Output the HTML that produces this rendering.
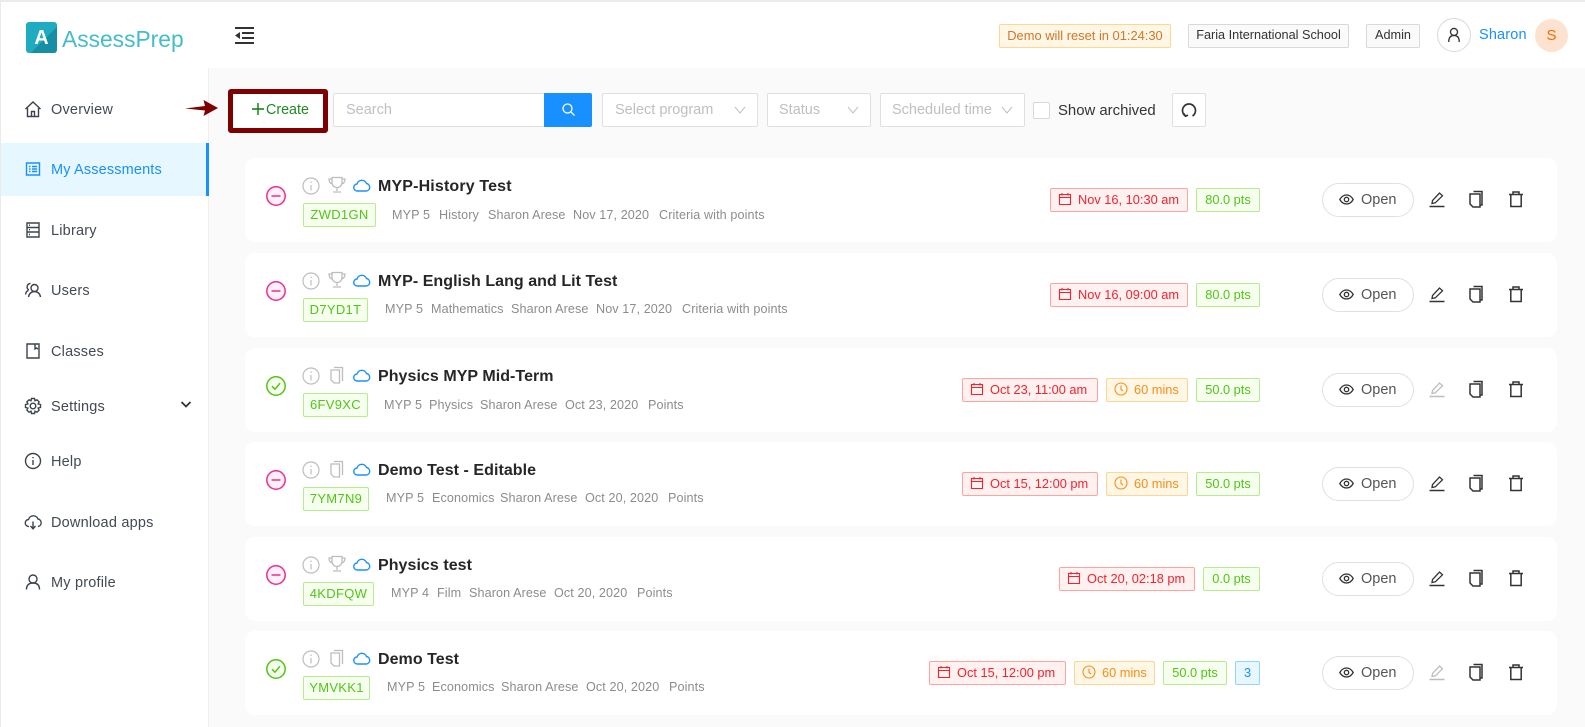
<!DOCTYPE html>
<html><head><meta charset="utf-8"><style>
html,body{margin:0;padding:0}
body{width:1585px;height:727px;overflow:hidden;position:relative;background:#fafafa;font-family:"Liberation Sans",sans-serif;color:#333}
div,span,svg{position:absolute;box-sizing:border-box}
.n{white-space:nowrap;line-height:20px;height:20px;font-size:14.5px;color:#434a54;left:51px;letter-spacing:.2px}
.ni{left:24px;width:18px;height:18px;fill:none;stroke:#3c434d;stroke-width:1.4}
.tag{height:24px;top:24px;font-size:12.7px;line-height:21px;text-align:center;border:1px solid #d9d9d9;border-radius:2px;background:#fafafa;color:#333;white-space:nowrap}
.in{top:93px;height:34px;background:#fff;border:1px solid #e0e0e0;border-radius:2px;font-size:14.5px;color:#bfbfbf;line-height:33px;white-space:nowrap}
.in span{left:12px;top:0}
.in svg{top:11px;width:12px;height:10px;fill:none;stroke:#bfbfbf;stroke-width:1}
.c{left:245px;width:1312px;height:84px;background:#fff;border-radius:10px}
.st{left:21px;top:28px;width:20px;height:20px;fill:none;stroke-width:1.5}
.g{left:57px;top:19px;width:18px;height:18px;fill:none;stroke:#bdbdbd;stroke-width:1.2}
.g2{left:83px;top:18px;width:18px;height:18px;fill:none;stroke:#bdbdbd;stroke-width:1.3}
.cl{left:108px;top:20px;width:18px;height:15px;fill:none;stroke:#1890ff;stroke-width:1.4}
.t{left:133px;top:18px;line-height:22px;font-size:16px;font-weight:700;color:#262626;white-space:nowrap;letter-spacing:.05px}
.k{left:58px;top:45px;height:24px;background:#f6ffed;border:1px solid #b7eb8f;border-radius:2px;color:#52c41a;font-size:13px;line-height:22px;text-align:center;letter-spacing:.3px}
.m{top:48px;line-height:18px;font-size:12.6px;color:#8c8c8c;white-space:nowrap;letter-spacing:.1px}
.up .m{top:47px}
.b{top:30px;height:24px;border:1px solid;border-radius:2px;font-size:12.8px;line-height:22px;white-space:nowrap}
.b span{top:0}
.r{background:#fff1f0;border-color:#ffa39e;color:#f5222d}
.o{background:#fff7e6;border-color:#ffd591;color:#fa8c16}
.v{background:#f6ffed;border-color:#b7eb8f;color:#52c41a;text-align:center}
.u{background:#e6f7ff;border-color:#91d5ff;color:#1890ff;text-align:center}
.b svg{left:7px;top:3px;width:14px;height:14px;fill:none;stroke:currentColor;stroke-width:1.1}
.op{left:1077px;top:25px;width:92px;height:34px;border:1px solid #e0e0e0;border-radius:17px;background:#fff;font-size:14.5px;color:#555;line-height:32px}
.op span{left:38px;top:0}
.op svg{left:16px;top:8px;width:15px;height:15px;fill:none;stroke:#333;stroke-width:1.3}
.a{top:32px;width:18px;height:18px;fill:none;stroke:#333;stroke-width:1.3}
.pe{left:1183px}.co{left:1222px}.tr{left:1262px}
.dis{stroke:#bdbdbd}
</style></head><body>
<svg width="0" height="0" style="left:0;top:0">
<symbol id="minus" viewBox="0 0 20 20"><circle cx="10" cy="10" r="9.2" fill="#fff0f6" stroke="#eb2f96"/><path d="M5.5 10h9" stroke="#eb2f96"/></symbol>
<symbol id="check" viewBox="0 0 20 20"><circle cx="10" cy="10" r="9.2" fill="#f6ffed" stroke="#52c41a"/><path d="M6 10.2l3 3 5-6" stroke="#52c41a"/></symbol>
<symbol id="info" viewBox="0 0 18 18"><circle cx="9" cy="9" r="8"/><path d="M9 8v5.5M9 4.500v1.500"/></symbol>
<symbol id="trophy" viewBox="0 0 18 18"><path d="M4 1.500h10v5a5 5 0 0 1-10 0zM4 3H1c0 3 1 4.500 3.500 5M14 3h3c0 3-1 4.500-3.500 5M9 11.500v3.500M5 16h8"/></symbol>
<symbol id="copyg" viewBox="0 0 18 18"><path d="M6 1.500h8.500v13.500M3 4h8.500v13H6l-3-3z"/></symbol>
<symbol id="cloud" viewBox="0 0 18 15"><path d="M4.500 13a3.500 3.500 0 0 1-.5-7A5 5 0 0 1 13.500 5.500 3.800 3.800 0 0 1 13.500 13z"/></symbol>
<symbol id="cal" viewBox="0 0 14 14"><path d="M1.500 2.500h11v10h-11zM1.500 5.500h11M4 1v2.500M10 1v2.500"/></symbol>
<symbol id="clk" viewBox="0 0 14 14"><circle cx="7" cy="7" r="6"/><path d="M7 3.500V7.500l2 1.500"/></symbol>
<symbol id="eye" viewBox="0 0 15 15"><path d="M.8 7.500C2.500 4.500 4.800 3 7.500 3s5 1.500 6.700 4.500C12.500 10.500 10.200 12 7.500 12S2.500 10.500.8 7.500z"/><circle cx="7.500" cy="7.500" r="2.200"/></symbol>
<symbol id="pen" viewBox="0 0 18 18"><path d="M1.500 16.500h15" stroke-width="1.500"/><path d="M4 13.500l.5-3L11.500 3l3 2.800-7.200 7z"/></symbol>
<symbol id="cop" viewBox="0 0 18 18"><path d="M6.500 1.500h8.500v13.500h-1.500M3 4h10v13H6l-3-3z" stroke-width="1.500"/></symbol>
<symbol id="tra" viewBox="0 0 18 18"><path d="M2 4.500h14M6 4.500V2h6v2.500M3.800 4.500V16.500h10.400V4.500" stroke-width="1.500"/></symbol>
<symbol id="chev" viewBox="0 0 12 10"><path d="M1 2l5 6 5-6"/></symbol>
</svg>

<div style="left:0;top:0;width:1585px;height:68px;background:#fff"></div>
<div style="left:0;top:0;width:1585px;height:2px;background:#ebebeb"></div>
<div style="left:0;top:68px;width:209px;height:659px;background:#fff;border-right:1px solid #efefef"></div>
<div style="left:0;top:0;width:1px;height:727px;background:#ebebeb"></div>

<div style="left:26px;top:22px;width:31px;height:31px;border-radius:3px;background:linear-gradient(135deg,#1fabc0 58%,#168fa5 58%)"></div>
<div style="left:26px;top:22px;width:31px;height:31px;color:#fff;font-weight:700;font-size:20px;line-height:32px;text-align:center">A</div>
<div style="left:62px;top:23px;font-size:22.8px;line-height:32px;color:#45bccb;white-space:nowrap">AssessPrep</div>
<svg style="left:235px;top:27px;width:20px;height:17px" viewBox="0 0 20 17" fill="none" stroke="#333" stroke-width="2"><path d="M0 1h19M7 6h12M7 11h12M0 16h19"/><path d="M5 5v7L0 8.500z" fill="#333" stroke="none"/></svg>

<div class="tag" style="left:999px;width:172px;background:#fff7e6;border-color:#ffd591;color:#d4762a;font-size:12.9px">Demo will reset in 01:24:30</div>
<div class="tag" style="left:1188px;width:161px">Faria International School</div>
<div class="tag" style="left:1366px;width:54px">Admin</div>
<div style="left:1437px;top:18px;width:34px;height:34px;border-radius:50%;border:1px solid #d9d9d9"></div>
<svg style="left:1447px;top:27px;width:14px;height:16px" viewBox="0 0 16 18" fill="none" stroke="#333" stroke-width="1.500"><circle cx="8" cy="5.500" r="4"/><path d="M2 17c0-5 2-7.500 6-7.500s6 2.500 6 7.500"/></svg>
<div style="left:1479px;top:25px;font-size:14.5px;line-height:20px;color:#1890ff;letter-spacing:.15px">Sharon</div>
<div style="left:1535px;top:19px;width:33px;height:33px;border-radius:50%;background:#fde3cf;color:#f56a00;font-size:15px;line-height:33px;text-align:center">S</div>

<svg class="ni" style="top:100px" viewBox="0 0 18 18"><path d="M1.500 9L9 2l7.500 7M3.500 8v8.500h11V8M7.500 16.500v-5h3v5"/></svg>
<div class="n" style="top:100px">Overview</div>
<div style="left:1px;top:143px;width:208px;height:53px;background:#e6f7ff;border-right:3px solid #1890ff"></div>
<svg class="ni" style="top:160px;stroke:#1890ff" viewBox="0 0 18 18"><path d="M2.500 3h13v12h-13zM5 6.500h1.500M8 6.500h5M5 9h1.500M8 9h5M5 11.500h1.500M8 11.500h5"/></svg>
<div class="n" style="top:160px;color:#1890ff;letter-spacing:.15px">My Assessments</div>
<svg class="ni" style="top:221px" viewBox="0 0 18 18"><path d="M3 2h12v14H3zM3 6.500h12M3 11h12M5 4.200h1M5 8.700h1M5 13.500h1"/></svg>
<div class="n" style="top:221px">Library</div>
<svg class="ni" style="top:281px" viewBox="0 0 18 18"><circle cx="10.500" cy="7" r="3.500"/><path d="M4.500 16c.5-3.500 3-5.500 6-5.500s5.500 2 6 5.500M6.500 2.500A3.500 3.500 0 0 0 4.800 9M1.500 13.500c.3-2 1.300-3.500 3-4.200"/></svg>
<div class="n" style="top:281px">Users</div>
<svg class="ni" style="top:342px" viewBox="0 0 18 18"><path d="M3 2h12v14H3zM11 2v5l1.500-1 1.500 1"/></svg>
<div class="n" style="top:342px">Classes</div>
<svg class="ni" style="top:397px" viewBox="0 0 18 18"><circle cx="9" cy="9" r="2.800"/><path d="M7.500 1.500h3l.5 2.200 2-.9 2.100 2.100-1 2 2.400.6v3l-2.400.6 1 2-2.100 2.100-2-1-.5 2.300h-3l-.5-2.300-2 1-2.100-2.100 1-2-2.400-.6v-3l2.400-.6-1-2 2.100-2.100 2 .9z"/></svg>
<div class="n" style="top:397px">Settings</div>
<svg style="left:180px;top:400px;width:12px;height:9px" viewBox="0 0 12 9" fill="none" stroke="#333" stroke-width="1.800"><path d="M1.500 2l4.500 4.500L10.500 2"/></svg>
<svg class="ni" style="top:452px" viewBox="0 0 18 18"><circle cx="9" cy="9" r="7.500"/><path d="M9 8v5M9 5v1.300"/></svg>
<div class="n" style="top:452px">Help</div>
<svg class="ni" style="top:513px" viewBox="0 0 18 18"><path d="M5 13.500a3.500 3.500 0 0 1-.5-7A5 5 0 0 1 14 6a3.800 3.800 0 0 1 0 7.500M9 8.500v7M6.500 13l2.500 2.800 2.500-2.800"/></svg>
<div class="n" style="top:513px">Download apps</div>
<svg class="ni" style="top:573px" viewBox="0 0 18 18"><circle cx="9" cy="6" r="4"/><path d="M2.500 16.500c0-4.500 2.500-6.500 6.500-6.500s6.500 2 6.500 6.500"/></svg>
<div class="n" style="top:573px">My profile</div>

<svg style="left:185px;top:99px;width:34px;height:18px" viewBox="0 0 34 18"><path d="M0 9.500L20 7 18.500 1 33 9 18.500 17 20 11.500z" fill="#7f0000"/></svg>
<div style="left:228px;top:89px;width:100px;height:44px;background:#fff;border:5px solid #7f0000;border-radius:3px"></div>
<svg style="left:252px;top:103px;width:12px;height:12px" viewBox="0 0 13 13" stroke="#0a7a0a" stroke-width="1.500"><path d="M6.500 0v13M0 6.500h13"/></svg>
<div style="left:266px;top:100px;font-size:14.3px;line-height:20px;color:#1f8a1f;white-space:nowrap">Create</div>

<div class="in" style="left:333px;width:212px;border-radius:2px 0 0 2px"><span>Search</span></div>
<div style="left:544px;top:93px;width:48px;height:34px;background:#1890ff;border-radius:0 2px 2px 0"></div>
<svg style="left:561px;top:102px;width:15px;height:15px" viewBox="0 0 15 15" fill="none" stroke="#fff" stroke-width="1.300"><circle cx="6.500" cy="6.500" r="4.500"/><path d="M10 10l3.500 3.500"/></svg>
<div class="in" style="left:602px;width:156px"><span>Select program</span><svg style="left:131px"><use href="#chev"/></svg></div>
<div class="in" style="left:767px;width:104px"><span style="left:11px">Status</span><svg style="left:79px"><use href="#chev"/></svg></div>
<div class="in" style="left:880px;width:145px"><span style="left:11px">Scheduled time</span><svg style="left:120px"><use href="#chev"/></svg></div>
<div style="left:1033px;top:102px;width:17px;height:17px;background:#fff;border:1px solid #d9d9d9;border-radius:2px"></div>
<div style="left:1058px;top:101px;font-size:14.9px;line-height:20px;color:#333;white-space:nowrap">Show archived</div>
<div style="left:1172px;top:93px;width:34px;height:34px;background:#fff;border:1px solid #e0e0e0;border-radius:2px"></div>
<svg style="left:1181px;top:102px;width:16px;height:16px" viewBox="0 0 16 16" fill="none" stroke="#333" stroke-width="1.700"><path d="M4.500 14A6.500 6.500 0 1 1 11.500 14M2.800 11.500l1.700 2.700 2.500-1"/></svg>

<!-- Row 1 -->
<div class="c" style="top:158px">
<svg class="st"><use href="#minus"/></svg><svg class="g"><use href="#info"/></svg><svg class="g2"><use href="#trophy"/></svg><svg class="cl"><use href="#cloud"/></svg>
<div class="t" style="letter-spacing:.15px">MYP-History Test</div><div class="k" style="width:73px">ZWD1GN</div>
<span class="m" style="left:147px">MYP 5</span><span class="m" style="left:194px">History</span><span class="m" style="left:243px">Sharon Arese</span><span class="m" style="left:328px">Nov 17, 2020</span><span class="m" style="left:414px">Criteria with points</span>
<div class="b r" style="left:805px;width:138px"><svg><use href="#cal"/></svg><span style="left:27px">Nov 16, 10:30 am</span></div>
<div class="b v" style="left:951px;width:64px">80.0 pts</div>
<div class="op"><svg><use href="#eye"/></svg><span>Open</span></div><svg class="a pe"><use href="#pen"/></svg><svg class="a co"><use href="#cop"/></svg><svg class="a tr"><use href="#tra"/></svg>
</div>
<!-- Row 2 -->
<div class="c up" style="top:253px">
<svg class="st"><use href="#minus"/></svg><svg class="g"><use href="#info"/></svg><svg class="g2"><use href="#trophy"/></svg><svg class="cl"><use href="#cloud"/></svg>
<div class="t">MYP- English Lang and Lit Test</div><div class="k" style="width:65px">D7YD1T</div>
<span class="m" style="left:140px">MYP 5</span><span class="m" style="left:186px">Mathematics</span><span class="m" style="left:266px">Sharon Arese</span><span class="m" style="left:351px">Nov 17, 2020</span><span class="m" style="left:437px">Criteria with points</span>
<div class="b r" style="left:805px;width:138px"><svg><use href="#cal"/></svg><span style="left:27px">Nov 16, 09:00 am</span></div>
<div class="b v" style="left:951px;width:64px">80.0 pts</div>
<div class="op"><svg><use href="#eye"/></svg><span>Open</span></div><svg class="a pe"><use href="#pen"/></svg><svg class="a co"><use href="#cop"/></svg><svg class="a tr"><use href="#tra"/></svg>
</div>
<!-- Row 3 -->
<div class="c" style="top:348px">
<svg class="st"><use href="#check"/></svg><svg class="g"><use href="#info"/></svg><svg class="g2"><use href="#copyg"/></svg><svg class="cl"><use href="#cloud"/></svg>
<div class="t">Physics MYP Mid-Term</div><div class="k" style="width:65px">6FV9XC</div>
<span class="m" style="left:139px">MYP 5</span><span class="m" style="left:184px">Physics</span><span class="m" style="left:235px">Sharon Arese</span><span class="m" style="left:320px">Oct 23, 2020</span><span class="m" style="left:403px">Points</span>
<div class="b r" style="left:717px;width:136px"><svg><use href="#cal"/></svg><span style="left:27px">Oct 23, 11:00 am</span></div>
<div class="b o" style="left:861px;width:82px"><svg><use href="#clk"/></svg><span style="left:27px">60 mins</span></div>
<div class="b v" style="left:951px;width:64px">50.0 pts</div>
<div class="op"><svg><use href="#eye"/></svg><span>Open</span></div><svg class="a pe dis"><use href="#pen"/></svg><svg class="a co"><use href="#cop"/></svg><svg class="a tr"><use href="#tra"/></svg>
</div>
<!-- Row 4 -->
<div class="c up" style="top:442px">
<svg class="st"><use href="#minus"/></svg><svg class="g"><use href="#info"/></svg><svg class="g2"><use href="#copyg"/></svg><svg class="cl"><use href="#cloud"/></svg>
<div class="t">Demo Test - Editable</div><div class="k" style="width:66px">7YM7N9</div>
<span class="m" style="left:141px">MYP 5</span><span class="m" style="left:187px">Economics</span><span class="m" style="left:255px">Sharon Arese</span><span class="m" style="left:340px">Oct 20, 2020</span><span class="m" style="left:423px">Points</span>
<div class="b r" style="left:717px;width:136px"><svg><use href="#cal"/></svg><span style="left:27px">Oct 15, 12:00 pm</span></div>
<div class="b o" style="left:861px;width:82px"><svg><use href="#clk"/></svg><span style="left:27px">60 mins</span></div>
<div class="b v" style="left:951px;width:64px">50.0 pts</div>
<div class="op"><svg><use href="#eye"/></svg><span>Open</span></div><svg class="a pe"><use href="#pen"/></svg><svg class="a co"><use href="#cop"/></svg><svg class="a tr"><use href="#tra"/></svg>
</div>
<!-- Row 5 -->
<div class="c up" style="top:537px">
<svg class="st"><use href="#minus"/></svg><svg class="g"><use href="#info"/></svg><svg class="g2"><use href="#trophy"/></svg><svg class="cl"><use href="#cloud"/></svg>
<div class="t">Physics test</div><div class="k" style="width:71px">4KDFQW</div>
<span class="m" style="left:146px">MYP 4</span><span class="m" style="left:192px">Film</span><span class="m" style="left:224px">Sharon Arese</span><span class="m" style="left:309px">Oct 20, 2020</span><span class="m" style="left:392px">Points</span>
<div class="b r" style="left:814px;width:136px"><svg><use href="#cal"/></svg><span style="left:27px">Oct 20, 02:18 pm</span></div>
<div class="b v" style="left:958px;width:57px">0.0 pts</div>
<div class="op"><svg><use href="#eye"/></svg><span>Open</span></div><svg class="a pe"><use href="#pen"/></svg><svg class="a co"><use href="#cop"/></svg><svg class="a tr"><use href="#tra"/></svg>
</div>
<!-- Row 6 -->
<div class="c up" style="top:631px">
<svg class="st"><use href="#check"/></svg><svg class="g"><use href="#info"/></svg><svg class="g2"><use href="#copyg"/></svg><svg class="cl"><use href="#cloud"/></svg>
<div class="t">Demo Test</div><div class="k" style="width:67px">YMVKK1</div>
<span class="m" style="left:142px">MYP 5</span><span class="m" style="left:187px">Economics</span><span class="m" style="left:256px">Sharon Arese</span><span class="m" style="left:341px">Oct 20, 2020</span><span class="m" style="left:424px">Points</span>
<div class="b r" style="left:684px;width:137px"><svg><use href="#cal"/></svg><span style="left:27px">Oct 15, 12:00 pm</span></div>
<div class="b o" style="left:829px;width:81px"><svg><use href="#clk"/></svg><span style="left:27px">60 mins</span></div>
<div class="b v" style="left:918px;width:64px">50.0 pts</div>
<div class="b u" style="left:990px;width:25px">3</div>
<div class="op"><svg><use href="#eye"/></svg><span>Open</span></div><svg class="a pe dis"><use href="#pen"/></svg><svg class="a co"><use href="#cop"/></svg><svg class="a tr"><use href="#tra"/></svg>
</div>
</body></html>
